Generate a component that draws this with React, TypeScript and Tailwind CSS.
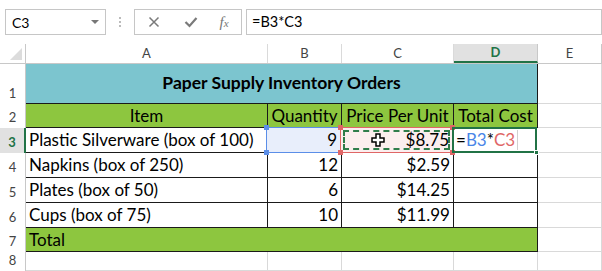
import React from 'react';

const font = { fontFamily: 'Lato, "Open Sans", Arial, sans-serif' };

const cols = ['w-[26px]', 'w-[242px]', 'w-[74px]', 'w-[112px]', 'w-[84px]', 'flex-1'];

function Handle({ className }: { className: string }) {
  return <span className={`absolute w-[5px] h-[5px] ${className}`} />;
}

function RowHeader({ n, active }: { n: number; active?: boolean }) {
  return (
    <div
      className={`w-[26px] shrink-0 flex items-end justify-center pb-[1px] text-[13px] border-r ${
        active ? 'bg-[#e1e1e1] text-[#217346] font-bold border-r-2 border-[#217346]' : 'text-[#444] border-[#c8c8c8]'
      }`}
    >
      {n}
    </div>
  );
}

function Cell({
  w,
  children,
  align = 'left',
  border = 'black',
  className = '',
}: {
  w: string;
  children?: React.ReactNode;
  align?: 'left' | 'right' | 'center';
  border?: 'black' | 'gray';
  className?: string;
}) {
  const b = border === 'black' ? 'border-[#1a1a1a]' : 'border-[#d9d9d9]';
  const a = align === 'right' ? 'justify-end pr-[3px]' : align === 'center' ? 'justify-center' : 'justify-start pl-[3px]';
  return (
    <div className={`${w} shrink-0 flex items-center border-r border-b ${b} ${a} ${className}`}>{children}</div>
  );
}

const rows = [
  { n: 4, item: 'Napkins (box of 250)', qty: '12', price: '$2.59' },
  { n: 5, item: 'Plates (box of 50)', qty: '6', price: '$14.25' },
  { n: 6, item: 'Cups (box of 75)', qty: '10', price: '$11.99' },
];

export default function App() {
  return (
    <div className="w-[602px] h-[271px] bg-white overflow-hidden text-black" style={font}>
      {/* formula bar */}
      <div className="h-[44px] flex items-start pt-[9px] pl-[5px]">
        <div className="w-[101px] h-[26px] border border-[#c6c6c6] flex items-center justify-between pl-[6px] pr-[6px] text-[14px]">
          <span>C3</span>
          <span className="w-0 h-0 border-l-[4px] border-r-[4px] border-t-[4px] border-l-transparent border-r-transparent border-t-[#777]" />
        </div>
        <div className="w-[28px] h-[26px] flex flex-col items-center justify-center gap-[2px]">
          <span className="w-[2px] h-[2px] bg-[#bbb]" />
          <span className="w-[2px] h-[2px] bg-[#bbb]" />
          <span className="w-[2px] h-[2px] bg-[#bbb]" />
        </div>
        <div className="w-[108px] h-[26px] border border-[#c6c6c6] flex items-center">
          <div className="w-[38px] flex justify-center">
            <svg width="12" height="12" viewBox="0 0 12 12">
              <path d="M1.5 1.5 L10.5 10.5 M10.5 1.5 L1.5 10.5" stroke="#7a7a7a" strokeWidth="1.5" />
            </svg>
          </div>
          <div className="w-[36px] flex justify-center">
            <svg width="14" height="12" viewBox="0 0 14 12">
              <path d="M1.5 6 L5.5 10 L12.5 2" stroke="#7a7a7a" strokeWidth="2.2" fill="none" />
            </svg>
          </div>
          <div
            className="w-[30px] flex items-baseline justify-center text-[#777] italic text-[15px] leading-none"
            style={{ fontFamily: '"Liberation Serif", serif' }}
          >
            <span>f</span>
            <span className="text-[11px]">x</span>
          </div>
        </div>
        <div className="ml-[4px] flex-1 h-[26px] border border-[#c6c6c6] flex items-center pl-[5px] text-[14.5px]">
          =B3*C3
        </div>
      </div>

      {/* column headers */}
      <div className="h-[20px] flex border-b border-[#c8c8c8] text-[13px] text-[#444]">
        <div className="w-[26px] shrink-0 border-r border-[#c8c8c8] relative">
          <svg className="absolute left-[10px] top-[4px]" width="12" height="12" viewBox="0 0 12 12">
            <path d="M12 0 L12 12 L0 12 Z" fill="#dcdcdc" />
          </svg>
        </div>
        <div className="w-[242px] shrink-0 flex items-center justify-center border-r border-[#dadada]">A</div>
        <div className="w-[74px] shrink-0 flex items-center justify-center border-r border-[#dadada]">B</div>
        <div className="w-[112px] shrink-0 flex items-center justify-center border-r border-[#dadada]">C</div>
        <div className="w-[84px] shrink-0 flex items-center justify-center bg-[#e1e1e1] text-[#217346] font-bold border-b-2 border-[#217346] border-r border-r-[#c8c8c8]">
          D
        </div>
        <div className="flex-1 flex items-center justify-center border-r border-[#c8c8c8]">E</div>
      </div>

      {/* row 1 */}
      <div className="h-[40px] flex">
        <RowHeader n={1} />
        <Cell w="w-[512px]" align="center" className="bg-[#7cc5cf] font-bold text-[17.5px]">
          Paper Supply Inventory Orders
        </Cell>
        <Cell w="flex-1" border="gray" />
      </div>

      {/* row 2 */}
      <div className="h-[24px] flex text-[17px]">
        <RowHeader n={2} />
        <Cell w={cols[1]} align="center" className="bg-[#8dc63f]">Item</Cell>
        <Cell w={cols[2]} align="center" className="bg-[#8dc63f]">Quantity</Cell>
        <Cell w={cols[3]} align="center" className="bg-[#8dc63f]">Price Per Unit</Cell>
        <Cell w={cols[4]} align="center" className="bg-[#8dc63f]">Total Cost</Cell>
        <Cell w="flex-1" border="gray" />
      </div>

      {/* row 3 */}
      <div className="h-[25px] flex text-[17px]">
        <RowHeader n={3} active />
        <Cell w="w-[241px]">Plastic Silverware (box of 100)</Cell>
        <Cell w={cols[2]} align="right" className="bg-[#e8eefb] relative">
          9
          <span className="absolute -left-[1px] -top-[1px] -right-[1px] -bottom-[1px] border border-[#5b8ee8]" />
          <Handle className="bg-[#5b8ee8] -left-[3px] -top-[3px]" />
          <Handle className="bg-[#5b8ee8] -left-[3px] -bottom-[3px]" />
        </Cell>
        <Cell w={cols[3]} align="right" className="bg-[#fbeeee] relative">
          <span className="absolute inset-[2px] border-2 border-dashed border-[#2f7d4a]" />
          <svg className="absolute left-[30px] top-[5px]" width="14" height="14" viewBox="0 0 14 14">
            <path
              d="M5 1 H9 V5 H13 V9 H9 V13 H5 V9 H1 V5 H5 Z"
              fill="white"
              stroke="black"
              strokeWidth="1.5"
            />
          </svg>
          <span className="relative">$8.75</span>
          <span className="absolute -left-[1px] -top-[1px] -right-[1px] -bottom-[1px] border border-[#e06666]" />
          <Handle className="bg-[#e06666] -left-[3px] -top-[3px]" />
          <Handle className="bg-[#e06666] -right-[3px] -top-[3px]" />
          <Handle className="bg-[#e06666] -left-[3px] -bottom-[3px]" />
          <Handle className="bg-[#e06666] -right-[3px] -bottom-[3px]" />
        </Cell>
        <Cell w={cols[4]} className="relative">
          <span>=</span>
          <span className="text-[#4a86e8]">B3</span>
          <span>*</span>
          <span className="text-[#e06666]">C3</span>
          <span className="ml-[2px] w-[1px] h-[20px] bg-[#d0d0d0]" />
          <span className="absolute -left-[1px] -top-[1px] -right-[1px] -bottom-[1px] border-2 border-[#217346]" />
          <Handle className="bg-[#217346] -right-[3px] -bottom-[3px] border border-white" />
        </Cell>
        <Cell w="flex-1" border="gray" />
      </div>

      {/* rows 4-6 */}
      {rows.map((r) => (
        <div key={r.n} className="h-[25px] flex text-[17px]">
          <RowHeader n={r.n} />
          <Cell w={cols[1]}>{r.item}</Cell>
          <Cell w={cols[2]} align="right">{r.qty}</Cell>
          <Cell w={cols[3]} align="right">{r.price}</Cell>
          <Cell w={cols[4]} />
          <Cell w="flex-1" border="gray" />
        </div>
      ))}

      {/* row 7 */}
      <div className="h-[24px] flex text-[17px]">
        <RowHeader n={7} />
        <Cell w="w-[512px]" className="bg-[#8dc63f]">Total</Cell>
        <Cell w="flex-1" border="gray" />
      </div>

      {/* row 8 */}
      <div className="h-[19px] flex text-[17px]">
        <RowHeader n={8} />
        <Cell w={cols[1]} border="gray" />
        <Cell w={cols[2]} border="gray" />
        <Cell w={cols[3]} border="gray" />
        <Cell w={cols[4]} border="gray" />
        <Cell w="flex-1" border="gray" />
      </div>
    </div>
  );
}
